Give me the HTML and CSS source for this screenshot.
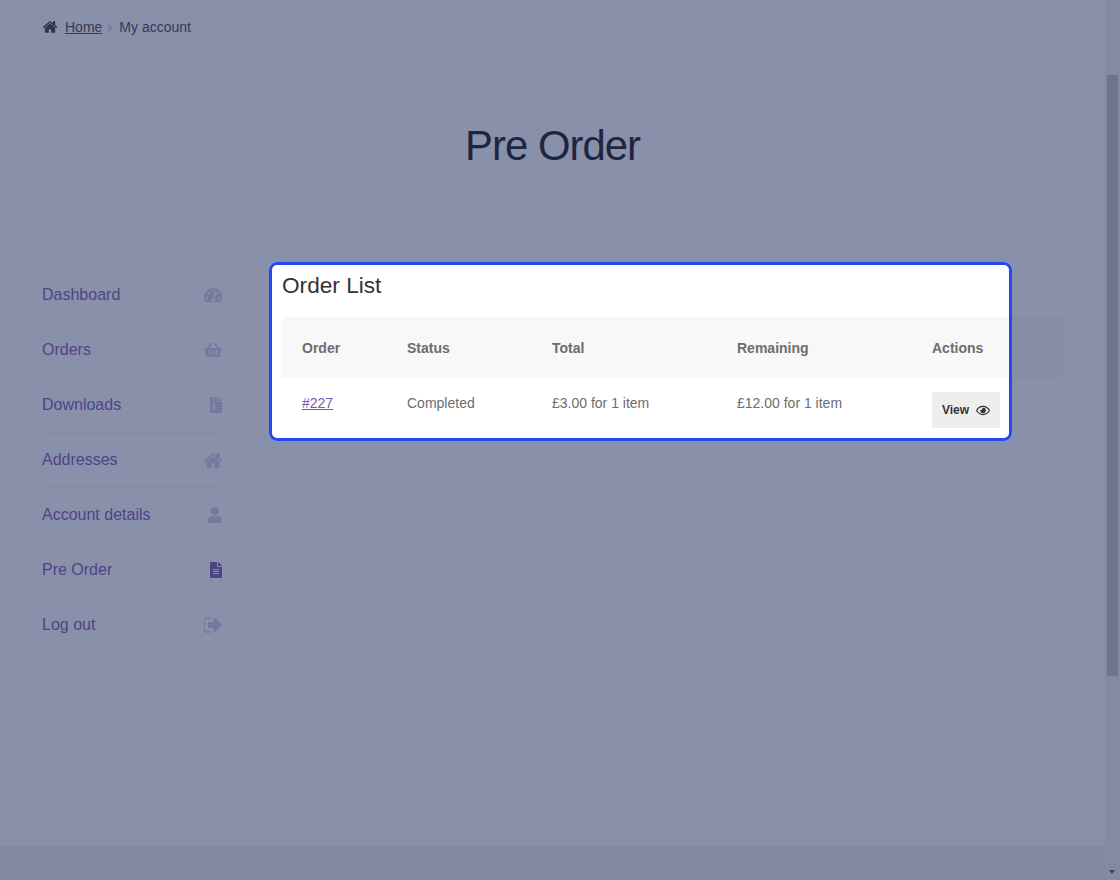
FILE: index.html
```html
<!DOCTYPE html>
<html lang="en">
<head>
<meta charset="utf-8">
<title>Pre Order</title>
<link rel="stylesheet" href="styles.css">
</head>
<body>
<div class="shell">
  <div class="page">
    <nav class="breadcrumb">
      <svg class="crumb-home" viewBox="0 0 1792 1792"><path d="M1472 992v480q0 26-19 45t-45 19h-384v-384h-256v384h-384q-26 0-45-19t-19-45v-480q0-1 .5-3t.5-3l575-474 575 474q1 2 1 6zm223-69l-62 74q-8 9-21 11h-3q-13 0-21-7l-692-577-692 577q-12 8-24 7-13-2-21-11l-62-74q-8-10-7-23.500t11-21.500l719-599q32-26 76-26t76 26l244 204v-195q0-14 9-23t23-9h192q14 0 23 9t9 23v408l219 182q10 8 11 21.500t-7 23.500z"/></svg>
      <a href="#" class="crumb-link">Home</a>
      <svg class="crumb-sep" viewBox="0 0 8 12"><path d="M1.500 1l4.500 5-4.500 5" fill="none" stroke="currentColor" stroke-width="1.800"/></svg>
      <span>My account</span>
    </nav>
    <h1 class="title">Pre Order</h1>
    <div class="account">
      <ul class="menu">
        <li><a href="#"><span>Dashboard</span>
          <svg class="ico" viewBox="0 0 576 512"><path fill-rule="evenodd" d="M288 32C129 32 0 161 0 320c0 53 14 102 39 145 6 10 16 15 27 15h444c11 0 21-5 27-15 25-43 39-92 39-145C576 161 447 32 288 32zM288 96a32 32 0 1 1-.1 0zM96 320a32 32 0 1 1-.1 0zM144 160a32 32 0 1 1-.1 0zM480 320a32 32 0 1 1-.1 0zM432 160a32 32 0 1 1-.1 0zM353 134c3-13 17-20 29-17 13 3 20 17 17 29l-61 230c10 11 16 25 16 40 0 12-3 23-7 33H239c-4-10-7-21-7-33 0-31 25-56 56-56l4 0z"/></svg></a></li>
        <li><a href="#"><span>Orders</span>
          <svg class="ico" viewBox="0 0 576 512"><path d="M576 216v16c0 13.255-10.745 24-24 24h-8l-26.113 182.788C514.509 462.435 494.257 480 470.370 480H105.630c-23.887 0-44.139-17.565-47.518-41.212L32 256h-8c-13.255 0-24-10.745-24-24v-16c0-13.255 10.745-24 24-24h67.341l106.780-146.821c10.395-14.292 30.407-17.453 44.701-7.058 14.293 10.395 17.453 30.408 7.058 44.701L170.477 192h235.046L326.120 82.821c-10.395-14.292-7.234-34.306 7.059-44.701 14.291-10.395 34.306-7.235 44.701 7.058L484.659 192H552c13.255 0 24 10.745 24 24zM312 392V280c0-13.255-10.745-24-24-24s-24 10.745-24 24v112c0 13.255 10.745 24 24 24s24-10.745 24-24zm112 0V280c0-13.255-10.745-24-24-24s-24 10.745-24 24v112c0 13.255 10.745 24 24 24s24-10.745 24-24zm-224 0V280c0-13.255-10.745-24-24-24s-24 10.745-24 24v112c0 13.255 10.745 24 24 24s24-10.745 24-24z"/></svg></a></li>
        <li><a href="#"><span>Downloads</span>
          <svg class="ico" viewBox="0 0 384 512"><path d="M377 105L279.100 7c-4.500-4.500-10.600-7-17-7H256v128h128v-6.100c0-6.300-2.500-12.400-7-16.900zM128.400 336c-17.900 0-32.400 12.100-32.400 27 0 15 14.600 27 32.500 27s32.400-12.100 32.400-27-14.600-27-32.500-27zM224 136V0h-63.600v32h-32V0H24C10.700 0 0 10.700 0 24v464c0 13.300 10.700 24 24 24h336c13.300 0 24-10.700 24-24V160H248c-13.200 0-24-10.800-24-24zM95.900 32h32v32h-32zm32.300 384c-33.200 0-58-30.400-51.400-62.900L96.400 256v-32h32v-32h-32v-32h32v-32h-32V96h32V64h32v32h-32v32h32v32h-32v32h32v32h-32v32h22.100c5.700 0 10.700 4.100 11.800 9.700l17.300 87.700c6.400 32.400-18.400 62.600-51.400 62.600z"/></svg></a></li>
        <li><a href="#"><span>Addresses</span>
          <svg class="ico ico-home" viewBox="100 200 1592 1320"><path d="M1472 992v480q0 26-19 45t-45 19h-384v-384h-256v384h-384q-26 0-45-19t-19-45v-480q0-1 .5-3t.5-3l575-474 575 474q1 2 1 6zm223-69l-62 74q-8 9-21 11h-3q-13 0-21-7l-692-577-692 577q-12 8-24 7-13-2-21-11l-62-74q-8-10-7-23.500t11-21.500l719-599q32-26 76-26t76 26l244 204v-195q0-14 9-23t23-9h192q14 0 23 9t9 23v408l219 182q10 8 11 21.500t-7 23.500z"/></svg></a></li>
        <li><a href="#"><span>Account details</span>
          <svg class="ico" viewBox="0 0 448 512"><path d="M224 256c70.700 0 128-57.300 128-128S294.700 0 224 0 96 57.300 96 128s57.300 128 128 128zm89.600 32h-16.700c-22.200 10.200-46.900 16-72.900 16s-50.600-5.800-72.900-16h-16.700C60.200 288 0 348.200 0 422.400V464c0 26.500 21.500 48 48 48h352c26.500 0 48-21.500 48-48v-41.600c0-74.200-60.200-134.400-134.400-134.400z"/></svg></a></li>
        <li class="active"><a href="#"><span>Pre Order</span>
          <svg class="ico" viewBox="0 0 384 512"><path d="M224 136V0H24C10.700 0 0 10.700 0 24v464c0 13.300 10.700 24 24 24h336c13.300 0 24-10.700 24-24V160H248c-13.200 0-24-10.800-24-24zm64 236c0 6.600-5.400 12-12 12H108c-6.600 0-12-5.400-12-12v-8c0-6.600 5.400-12 12-12h168c6.600 0 12 5.400 12 12v8zm0-64c0 6.600-5.400 12-12 12H108c-6.600 0-12-5.400-12-12v-8c0-6.600 5.400-12 12-12h168c6.600 0 12 5.400 12 12v8zm0-72v8c0 6.600-5.400 12-12 12H108c-6.600 0-12-5.400-12-12v-8c0-6.600 5.400-12 12-12h168c6.600 0 12 5.400 12 12zm96-114.100v6.100H256V0h6.100c6.400 0 12.500 2.500 17 7l97.900 98c4.500 4.500 7 10.600 7 16.900z"/></svg></a></li>
        <li><a href="#"><span>Log out</span>
          <svg class="ico" viewBox="128 256 1504 1280"><path d="M704 1440q0 4 1 20t.5 26.500-3 23.500-10 19.500-20.500 6.500h-320q-119 0-203.500-84.500t-84.500-203.500v-704q0-119 84.500-203.500t203.500-84.500h320q13 0 22.500 9.500t9.500 22.500q0 4 1 20t.5 26.500-3 23.500-10 19.500-20.500 6.500h-320q-66 0-113 47t-47 113v704q0 66 47 113t113 47h312l11.500 1 11.500 3 8 5.500 7 9 2 13.500zm928-544q0 26-19 45l-544 544q-19 19-45 19t-45-19-19-45v-288h-448q-26 0-45-19t-19-45v-384q0-26 19-45t45-19h448v-288q0-26 19-45t45-19 45 19l544 544q19 19 19 45z"/></svg></a></li>
      </ul>
      <section class="content">
        <h2 class="list-title">Order List</h2>
        <table class="orders">
          <thead>
            <tr><th class="c1">Order</th><th class="c2">Status</th><th class="c3">Total</th><th class="c4">Remaining</th><th class="c5">Actions</th></tr>
          </thead>
          <tbody>
            <tr>
              <td><a href="#" class="order-link">#227</a></td>
              <td>Completed</td>
              <td>£3.00 for 1 item</td>
              <td>£12.00 for 1 item</td>
              <td><a href="#" class="btn">View <svg class="eye" viewBox="0 0 576 512"><path d="M288 144a110.940 110.940 0 0 0-31.240 5 55.400 55.400 0 0 1 7.240 27 56 56 0 0 1-56 56 55.400 55.400 0 0 1-27-7.240A111.710 111.710 0 1 0 288 144zm284.520 97.400C518.290 135.590 410.930 64 288 64S57.680 135.640 3.480 241.410a32.350 32.350 0 0 0 0 29.190C57.710 376.410 165.070 448 288 448s230.320-71.640 284.520-177.410a32.350 32.350 0 0 0 0-29.190zM288 400c-98.650 0-189.090-55-237.930-144C98.910 167 189.340 112 288 112s189.090 55 237.930 144C477.100 345 386.660 400 288 400z"/></svg></a></td>
            </tr>
          </tbody>
        </table>
      </section>
    </div>
    <footer class="footer"></footer>
  </div>
  <div class="scrollbar">
    <div class="thumb"></div>
    <div class="arrow"></div>
  </div>
</div>
<div class="spotlight"></div>
</body>
</html>
```
FILE: styles.css
```css
html, body {
  margin: 0;
  height: 880px;
  overflow: hidden;
  background: #fff;
}
body {
  font-family: "Liberation Sans", Arial, sans-serif;
  font-size: 16px;
  color: #43454b;
}
.shell {
  display: flex;
  height: 880px;
}
.page {
  flex: 1;
  display: flex;
  flex-direction: column;
  min-width: 0;
}
.breadcrumb {
  display: flex;
  align-items: center;
  height: 22px;
  margin: 16px 0 0 42px;
  font-size: 14px;
  color: #43454b;
}
.crumb-home {
  width: 16px;
  height: 16px;
  fill: #333;
  margin-right: 7px;
}
.crumb-link {
  color: #43454b;
  text-decoration: underline;
}
.crumb-sep {
  width: 6px;
  height: 8px;
  margin: 1px 6px 0 5px;
  color: #b5b5b5;
}
.title {
  margin: 74px 0 0;
  height: 67px;
  line-height: 67px;
  font-size: 41.887px;
  font-weight: 400;
  letter-spacing: -1px;
  text-align: center;
  color: #131315;
}
.account {
  display: flex;
  margin: 88px 42px 0;
  gap: 59px;
}
.menu {
  list-style: none;
  margin: 0;
  padding: 0;
  width: 181px;
  flex: none;
  border-bottom: 1px solid rgba(0,0,0,.05);
  align-self: flex-start;
}
.menu li {
  border-top: 1px solid rgba(0,0,0,.05);
}
.menu a {
  display: flex;
  align-items: center;
  justify-content: space-between;
  height: 54px;
  padding-right: 1px;
  color: #7f54b3;
  text-decoration: none;
}
.ico {
  height: 16px;
  max-width: 18px;
  fill: #7f54b3;
  opacity: .3;
}
.ico-home { width: 18px; }
.menu .active .ico { opacity: 1; }
.content {
  flex: 1;
  min-width: 0;
  font-size: 14px;
}
.list-title {
  margin: 0;
  height: 50px;
  line-height: 36px;
  font-size: 22.652px;
  font-weight: 400;
  color: #333;
}
.orders {
  width: 781px;
  border-collapse: collapse;
  table-layout: fixed;
}
.orders th {
  height: 61px;
  padding: 0 20px;
  background: #f8f8f8;
  text-align: left;
  font-weight: 700;
  color: #6d6d6d;
}
.orders td {
  padding: 14px 20px;
  vertical-align: top;
  line-height: 22px;
  color: #6d6d6d;
}
.c1 { width: 65px; }
.c2 { width: 105px; }
.c3 { width: 145px; }
.c4 { width: 155px; }
.c5 { width: 111px; }
.order-link {
  color: #7f54b3;
  text-decoration: underline;
}
.btn {
  display: inline-flex;
  align-items: center;
  gap: 7px;
  height: 36px;
  padding: 0 10px;
  background: #eee;
  color: #333;
  font-size: 12px;
  font-weight: 700;
  text-decoration: none;
}
.eye {
  width: 14px;
  height: 13px;
  fill: #333;
}
.footer {
  margin-top: auto;
  height: 34px;
  background: #f0f0f0;
}
.scrollbar {
  position: relative;
  flex: none;
  width: 15px;
  background: #f1f1f1;
  border-left: 0;
}
.thumb {
  position: absolute;
  left: 2px;
  right: 2px;
  top: 75px;
  height: 601px;
  background: #c1c1c1;
}
.arrow {
  position: absolute;
  left: 4px;
  bottom: 6px;
  width: 0;
  height: 0;
  border-left: 3.500px solid transparent;
  border-right: 3.500px solid transparent;
  border-top: 4px solid #505050;
}
.spotlight {
  position: absolute;
  left: 269px;
  top: 262px;
  width: 743px;
  height: 179px;
  box-sizing: border-box;
  border: 3px solid #2447f0;
  border-radius: 8px;
  box-shadow: 0 0 0 3000px rgba(40, 53, 99, .55);
}
```
